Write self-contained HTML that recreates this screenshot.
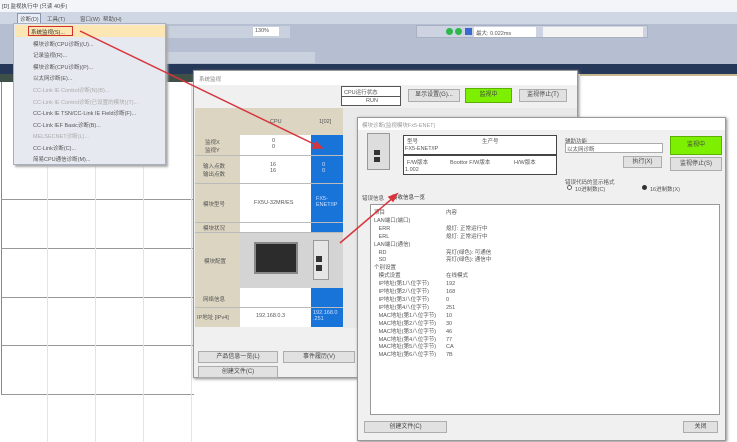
<!DOCTYPE html>
<html><head><meta charset="utf-8"><style>
*{margin:0;padding:0;box-sizing:border-box}
body{width:737px;height:442px;overflow:hidden;background:#fff;position:relative;font-family:"Liberation Sans","Noto Sans CJK SC",sans-serif;font-size:6px;color:#333}
.a{position:absolute}
.btn{position:absolute;background:#e1e1e1;border:1px solid #adadad;text-align:center;font-size:6px;line-height:11px;color:#444}
.g{background:#7cf000;border-color:#5cb000}
.t{position:absolute;font-size:5.5px;color:#555;white-space:nowrap}
</style></head><body>
<!-- title bar -->
<div class="a" style="left:0;top:0;width:737px;height:12px;background:#f4f5f8"></div>
<div class="t" style="left:2px;top:2px;color:#444">[D] 监视执行中 (只读 40步)</div>
<!-- menu bar -->
<div class="a" style="left:0;top:12px;width:737px;height:12px;background:#cfd6e4"></div>
<div class="a" style="left:17px;top:13px;width:24px;height:11px;background:#e8ecf4;border:1px solid #8896b0"></div>
<div class="t" style="left:20px;top:15px">诊断(D)</div>
<div class="t" style="left:47px;top:15px">工具(T)</div>
<div class="t" style="left:80px;top:15px">窗口(W)</div>
<div class="t" style="left:103px;top:15px">帮助(H)</div>
<!-- toolbar region -->
<div class="a" style="left:0;top:24px;width:737px;height:41px;background:#b6bfd1"></div>
<div class="a" style="left:165px;top:26px;width:125px;height:12px;background:#c9d0de"></div>
<div class="a" style="left:253px;top:27px;width:26px;height:9px;background:#fff"></div>
<div class="t" style="left:255px;top:28px">130%</div>
<div class="a" style="left:165px;top:52px;width:150px;height:11px;background:#c9d0de"></div>
<div class="a" style="left:416px;top:25px;width:232px;height:13px;background:#cdd3e0;border:1px solid #a8b0c2"></div>
<div class="a" style="left:446px;top:28px;width:7px;height:7px;border-radius:50%;background:#2db84a"></div>
<div class="a" style="left:455px;top:28px;width:7px;height:7px;border-radius:50%;background:#2db84a"></div>
<div class="a" style="left:465px;top:28px;width:7px;height:7px;background:#3a6ad0"></div>
<div class="a" style="left:474px;top:27px;width:62px;height:10px;background:#fff"></div>
<div class="t" style="left:476px;top:29px">最大: 0.022ms</div>
<div class="a" style="left:543px;top:27px;width:100px;height:10px;background:#f4f4f4"></div>
<!-- dark bars -->
<div class="a" style="left:0;top:64px;width:737px;height:10px;background:#25385a"></div>
<div class="a" style="left:0;top:74px;width:200px;height:8px;background:#3f5048"></div>
<div class="a" style="left:580px;top:74px;width:157px;height:2px;background:#c8b890"></div>
<!-- grid -->
<div class="a" style="left:1px;top:82px;width:192px;height:312px;border-left:1px solid #888"></div>
<div class="a" style="left:1px;top:199px;width:193px;height:1px;background:#999"></div>
<div class="a" style="left:1px;top:248px;width:193px;height:1px;background:#999"></div>
<div class="a" style="left:1px;top:297px;width:193px;height:1px;background:#999"></div>
<div class="a" style="left:1px;top:345px;width:193px;height:1px;background:#999"></div>
<div class="a" style="left:1px;top:394px;width:193px;height:1px;background:#999"></div>
<div class="a" style="left:47px;top:82px;width:1px;height:360px;background:#e4e4e4"></div>
<div class="a" style="left:95px;top:82px;width:1px;height:360px;background:#e4e4e4"></div>
<div class="a" style="left:143px;top:82px;width:1px;height:360px;background:#e4e4e4"></div>
<div class="a" style="left:191px;top:82px;width:1px;height:360px;background:#e4e4e4"></div>

<!-- dropdown menu -->
<div class="a" style="left:13px;top:23px;width:153px;height:142px;background:#e6e9f0;border:1px solid #a8afbf;box-shadow:2px 2px 2px #aaa"></div>
<div class="a" style="left:15px;top:25px;width:150px;height:12px;background:#fbe6b4"></div>
<div class="a" style="left:28px;top:26px;width:45px;height:10px;border:1px solid #d23030"></div>
<div class="t" style="left:31px;top:28px;color:#333">系统监视(S)...</div>
<div class="t" style="left:33px;top:40px">模块诊断(CPU诊断)(U)...</div>
<div class="t" style="left:33px;top:51px">记录监视(R)...</div>
<div class="t" style="left:33px;top:63px">模块诊断(CPU诊断)(P)...</div>
<div class="t" style="left:33px;top:74px">以太网诊断(E)...</div>
<div class="t" style="left:33px;top:86px;color:#aaa">CC-Link IE Control诊断(N)(B)...</div>
<div class="t" style="left:33px;top:98px;color:#aaa">CC-Link IE Control诊断(已设置的模块)(T)...</div>
<div class="t" style="left:33px;top:109px">CC-Link IE TSN/CC-Link IE Field诊断(F)...</div>
<div class="t" style="left:33px;top:121px">CC-Link IEF Basic诊断(B)...</div>
<div class="t" style="left:33px;top:132px;color:#aaa">MELSECNET诊断(L)...</div>
<div class="t" style="left:33px;top:144px">CC-Link诊断(C)...</div>
<div class="t" style="left:33px;top:155px">简易CPU通信诊断(M)...</div>

<!-- dialog 1 -->
<div class="a" style="left:193px;top:70px;width:385px;height:308px;background:#f0f0f0;border:1px solid #999;box-shadow:1px 1px 3px #888"></div>
<div class="a" style="left:194px;top:71px;width:383px;height:14px;background:#fff"></div>
<div class="t" style="left:199px;top:75px;color:#888">系统监视</div>
<div class="a" style="left:341px;top:86px;width:60px;height:20px;background:#fff;border:1px solid #555"></div>
<div class="a" style="left:341px;top:96px;width:60px;height:1px;background:#555"></div>
<div class="t" style="left:344px;top:88px">CPU运行状态</div>
<div class="t" style="left:366px;top:98px">RUN</div>
<div class="btn" style="left:408px;top:89px;width:52px;height:13px">显示设置(G)...</div>
<div class="btn g" style="left:465px;top:88px;width:47px;height:15px;line-height:13px">监视中</div>
<div class="btn" style="left:519px;top:89px;width:48px;height:13px">监视停止(T)</div>
<!-- table -->
<div class="a" style="left:195px;top:108px;width:148px;height:27px;background:#dcd5c2"></div>
<div class="t" style="left:270px;top:119px">CPU</div>
<div class="t" style="left:319px;top:119px">1[02]</div>
<div class="a" style="left:195px;top:135px;width:45px;height:192px;background:#dcd5c2"></div>
<div class="a" style="left:240px;top:135px;width:71px;height:97px;background:#fff"></div>
<div class="a" style="left:240px;top:288px;width:71px;height:39px;background:#fff"></div>
<div class="a" style="left:311px;top:135px;width:32px;height:97px;background:#1874d8"></div>
<div class="a" style="left:311px;top:288px;width:32px;height:39px;background:#1874d8"></div>
<div class="a" style="left:240px;top:232px;width:103px;height:56px;background:#d4d4d4"></div>
<div class="a" style="left:254px;top:242px;width:44px;height:32px;background:#2c2c2c;border:2px solid #888"></div>
<div class="a" style="left:313px;top:240px;width:16px;height:40px;background:#e6e6e6;border:1px solid #999"></div>
<div class="a" style="left:316px;top:256px;width:6px;height:6px;background:#333"></div>
<div class="a" style="left:316px;top:265px;width:6px;height:6px;background:#333"></div>
<div class="a" style="left:195px;top:155px;width:148px;height:1px;background:#bbb"></div>
<div class="a" style="left:195px;top:183px;width:148px;height:1px;background:#bbb"></div>
<div class="a" style="left:195px;top:222px;width:148px;height:1px;background:#bbb"></div>
<div class="a" style="left:195px;top:232px;width:148px;height:1px;background:#bbb"></div>
<div class="a" style="left:195px;top:307px;width:148px;height:1px;background:#bbb"></div>
<div class="t" style="left:205px;top:138px">监视X<br>监视Y</div>
<div class="t" style="left:272px;top:138px">0<br>0</div>
<div class="t" style="left:203px;top:162px">输入点数<br>输出点数</div>
<div class="t" style="left:270px;top:162px">16<br>16</div>
<div class="t" style="left:322px;top:162px;color:#cfe0ff">0<br>0</div>
<div class="t" style="left:203px;top:200px">模块型号</div>
<div class="t" style="left:254px;top:200px">FX5U-32MR/ES</div>
<div class="t" style="left:316px;top:196px;color:#cfe0ff">FX5-<br>ENET/IP</div>
<div class="t" style="left:203px;top:224px">模块状况</div>
<div class="t" style="left:204px;top:257px">模块配置</div>
<div class="t" style="left:203px;top:295px">网络信息</div>
<div class="t" style="left:197px;top:313px">IP地址 [IPv4]</div>
<div class="t" style="left:256px;top:313px">192.168.0.3</div>
<div class="t" style="left:313px;top:310px;color:#cfe0ff">192.168.0<br>.251</div>
<div class="a" style="left:343px;top:108px;width:234px;height:220px;background:#e9e9e9"></div>
<div class="btn" style="left:198px;top:351px;width:80px;height:12px">产品信息一览(L)</div>
<div class="btn" style="left:283px;top:351px;width:72px;height:12px">事件履历(V)</div>
<div class="btn" style="left:198px;top:366px;width:80px;height:12px">创建文件(C)</div>

<!-- dialog 2 -->
<div class="a" style="left:357px;top:117px;width:369px;height:324px;background:#f0f0f0;border:1px solid #999;box-shadow:1px 1px 3px #888"></div>
<div class="a" style="left:358px;top:118px;width:367px;height:12px;background:#fff"></div>
<div class="t" style="left:362px;top:121px;color:#999">模块诊断(监视模块Fx5-ENET)</div>
<div class="a" style="left:367px;top:133px;width:23px;height:37px;background:#ddd;border:1px solid #999"></div>
<div class="a" style="left:374px;top:150px;width:6px;height:5px;background:#333"></div>
<div class="a" style="left:374px;top:157px;width:6px;height:5px;background:#333"></div>
<div class="a" style="left:403px;top:135px;width:154px;height:40px;background:#fff;border:1px solid #444"></div>
<div class="a" style="left:403px;top:154px;width:154px;height:2px;background:#444"></div>
<div class="t" style="left:407px;top:137px">型号</div>
<div class="t" style="left:482px;top:137px">生产号</div>
<div class="t" style="left:405px;top:146px">FX5-ENET/IP</div>
<div class="t" style="left:407px;top:158px">F/W版本</div>
<div class="t" style="left:450px;top:158px">Boottor F/W版本</div>
<div class="t" style="left:514px;top:158px">H/W版本</div>
<div class="t" style="left:405px;top:167px">1.002</div>
<div class="t" style="left:565px;top:137px">辅助功能</div>
<div class="a" style="left:565px;top:143px;width:98px;height:10px;background:#fff;border:1px solid #aaa"></div>
<div class="t" style="left:567px;top:145px">以太网诊断</div>
<div class="btn" style="left:623px;top:156px;width:39px;height:12px">执行(X)</div>
<div class="btn g" style="left:670px;top:136px;width:52px;height:19px;line-height:17px">监视中</div>
<div class="btn" style="left:670px;top:157px;width:52px;height:14px;line-height:12px">监视停止(S)</div>
<div class="t" style="left:565px;top:178px">错误代码的显示格式</div>
<div class="a" style="left:567px;top:185px;width:5px;height:5px;border:1px solid #666;border-radius:50%;background:#fff"></div>
<div class="t" style="left:575px;top:185px">10进制数(C)</div>
<div class="a" style="left:642px;top:185px;width:5px;height:5px;border:1px solid #333;border-radius:50%;background:#333"></div>
<div class="t" style="left:650px;top:185px">16进制数(X)</div>
<div class="t" style="left:362px;top:194px">错误信息</div>
<div class="t" style="left:392px;top:193px;color:#333">接收信息一览</div>
<div class="a" style="left:370px;top:204px;width:350px;height:211px;background:#fff;border:1px solid #999"></div>
<div class="t" style="left:374px;top:210px;line-height:7.9px">项目<br>LAN端口(端口)<br>&nbsp;&nbsp;&nbsp;ERR<br>&nbsp;&nbsp;&nbsp;ERL<br>LAN端口(通信)<br>&nbsp;&nbsp;&nbsp;RD<br>&nbsp;&nbsp;&nbsp;SD<br>个别设置<br>&nbsp;&nbsp;&nbsp;模式设置<br>&nbsp;&nbsp;&nbsp;IP地址(第1八位字节)<br>&nbsp;&nbsp;&nbsp;IP地址(第2八位字节)<br>&nbsp;&nbsp;&nbsp;IP地址(第3八位字节)<br>&nbsp;&nbsp;&nbsp;IP地址(第4八位字节)<br>&nbsp;&nbsp;&nbsp;MAC地址(第1八位字节)<br>&nbsp;&nbsp;&nbsp;MAC地址(第2八位字节)<br>&nbsp;&nbsp;&nbsp;MAC地址(第3八位字节)<br>&nbsp;&nbsp;&nbsp;MAC地址(第4八位字节)<br>&nbsp;&nbsp;&nbsp;MAC地址(第5八位字节)<br>&nbsp;&nbsp;&nbsp;MAC地址(第6八位字节)</div>
<div class="t" style="left:446px;top:210px;line-height:7.9px">内容<br>&nbsp;<br>熄灯: 正常运行中<br>熄灯: 正常运行中<br>&nbsp;<br>亮灯(绿色): 可通信<br>亮灯(绿色): 通信中<br>&nbsp;<br>在线模式<br>192<br>168<br>0<br>251<br>10<br>30<br>46<br>77<br>CA<br>7B</div>
<div class="btn" style="left:364px;top:421px;width:83px;height:12px">创建文件(C)</div>
<div class="btn" style="left:683px;top:421px;width:35px;height:12px">关闭</div>

<!-- red arrows -->
<svg class="a" style="left:0;top:0" width="737" height="442">
<g stroke="#d8343c" stroke-width="1.5" fill="#d8343c">
<line x1="80" y1="31" x2="318" y2="146"/>
<polygon points="322,148 313,148 316,142"/>
<line x1="340" y1="243" x2="394" y2="197"/>
<polygon points="397,194 389,197 393,201"/>
</g></svg>
</body></html>
